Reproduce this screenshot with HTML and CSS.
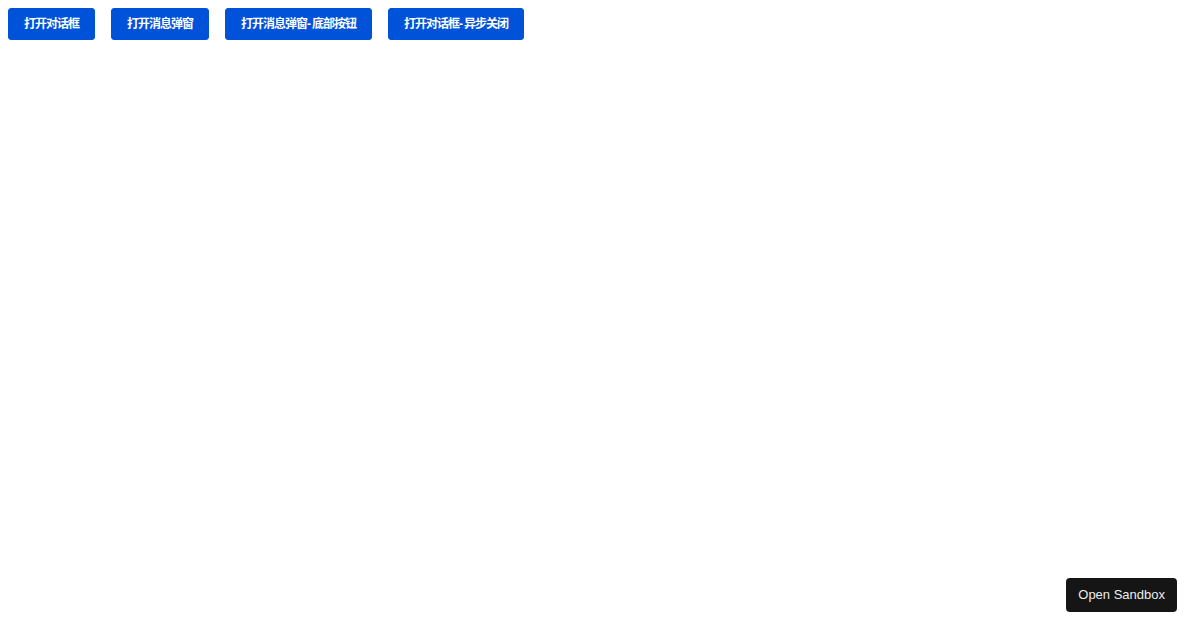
FILE: index.html
```html
<!DOCTYPE html>
<html lang="zh">
<head>
<meta charset="utf-8">
<link rel="stylesheet" href="styles.css">
</head>
<body>
<div class="toolbar">
  <button class="btn">打开对话框</button>
  <button class="btn">打开消息弹窗</button>
  <button class="btn">打开消息弹窗<span class="dash">-</span>底部按钮</button>
  <button class="btn">打开对话框<span class="dash">-</span>异步关闭</button>
</div>
<a class="sandbox">Open Sandbox</a>
</body>
</html>
```
FILE: styles.css
```css
html, body {
  margin: 0;
  padding: 0;
  background: #ffffff;
}
body {
  padding: 8px;
  font-family: "Liberation Sans", "Noto Sans CJK SC", sans-serif;
}
.toolbar {
  display: flex;
  gap: 16px;
  align-items: center;
}
.btn {
  height: 32px;
  padding: 0 15px;
  border: 1px solid #0052d9;
  border-radius: 3px;
  background: #0052d9;
  color: #ffffff;
  font-family: "Liberation Sans", "Noto Sans CJK SC", sans-serif;
  font-size: 12px;
  letter-spacing: -1px;
  font-weight: 700;
  line-height: 30px;
  cursor: pointer;
  white-space: nowrap;
}
.dash {
  letter-spacing: 0;
  padding: 0 1px 0 0;
}
.sandbox {
  position: fixed;
  right: 23px;
  bottom: 18px;
  height: 34px;
  line-height: 34px;
  padding: 0 12px;
  background: #151515;
  color: #ececec;
  border-radius: 4px;
  font-family: "Liberation Sans", sans-serif;
  font-size: 13px;
}
```
